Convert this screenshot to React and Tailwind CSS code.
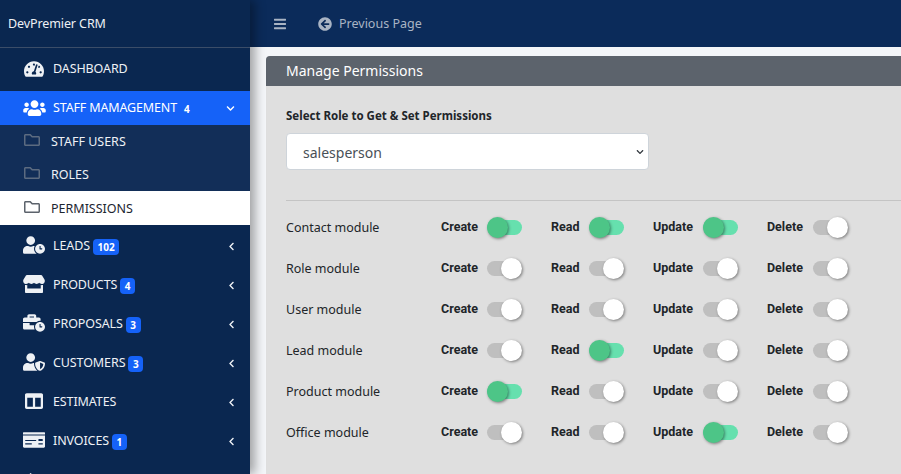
import React from "react";
import {
  FaTachometerAlt,
  FaUsers,
  FaChevronDown,
  FaChevronLeft,
  FaRegFolder,
  FaUserClock,
  FaStore,
  FaBusinessTime,
  FaUserShield,
  FaColumns,
  FaMoneyCheck,
  FaTasks,
  FaBars,
  FaArrowCircleLeft,
} from "react-icons/fa";

const menu = [
  { label: "LEADS", badge: "102", icon: FaUserClock },
  { label: "PRODUCTS", badge: "4", icon: FaStore },
  { label: "PROPOSALS", badge: "3", icon: FaBusinessTime },
  { label: "CUSTOMERS", badge: "3", icon: FaUserShield },
  { label: "ESTIMATES", icon: FaColumns },
  { label: "INVOICES", badge: "1", icon: FaMoneyCheck },
];

const subMenu = [
  { label: "STAFF USERS" },
  { label: "ROLES" },
  { label: "PERMISSIONS", active: true },
];

const modules = [
  { name: "Contact module", on: [true, true, true, false] },
  { name: "Role module", on: [false, false, false, false] },
  { name: "User module", on: [false, false, false, false] },
  { name: "Lead module", on: [false, true, false, false] },
  { name: "Product module", on: [true, false, false, false] },
  { name: "Office module", on: [false, false, true, false] },
];

const actions = ["Create", "Read", "Update", "Delete"];

const Toggle = ({ on }) => (
  <div
    className={`flex h-[15px] w-[35px] items-center rounded-full ${
      on ? "justify-start bg-[#66e0ae]" : "justify-end bg-[#bfbfbf]"
    }`}
  >
    <div
      className={`h-[21px] w-[21px] shrink-0 rounded-full shadow-[1px_1px_3px_rgba(0,0,0,0.45)] ${
        on ? "bg-[#4dc587]" : "bg-white"
      }`}
    />
  </div>
);

const Sidebar = () => (
  <aside className="z-10 flex w-[250px] shrink-0 flex-col bg-[#0a2750] text-[#eef1f5] shadow-[5px_0_10px_rgba(0,0,0,0.35)]">
    <div className="flex h-[48px] shrink-0 items-center border-b border-[#3b4d68] pl-2 pt-[1px] text-[12.5px] tracking-[-0.1px]">
      DevPremier CRM
    </div>
    <div className="flex h-[43px] shrink-0 items-center pb-[1px] pl-[24px] text-[12.5px] tracking-[-0.1px]">
      <span className="flex w-[29px] shrink-0">
        <FaTachometerAlt className="mt-[-1px] h-[18px] w-[20px]" />
      </span>
      DASHBOARD
    </div>
    <div className="flex h-[34px] shrink-0 items-center bg-[#1562f8] pl-[23px] pr-[15px] text-[12.5px] tracking-[-0.15px] text-white">
      <span className="flex w-[30px] shrink-0">
        <FaUsers className="h-[18px] w-[23px]" />
      </span>
      STAFF MAMAGEMENT
      <span className="ml-[7px] mt-[2px] text-[10px] font-bold">4</span>
      <FaChevronDown className="ml-auto h-[9px] w-[9px]" />
    </div>
    <div className="flex shrink-0 flex-col bg-[#122e58]">
      {subMenu.map((item) => (
        <div
          key={item.label}
          className={`flex items-center pl-[23px] text-[12.5px] ${
            item.active ? "h-[34px] bg-white text-[#1c2530]" : "h-[33px]"
          }`}
        >
          <span className={`flex w-[28px] shrink-0 ${item.active ? "text-[#5c636c]" : "text-[#5c6b80]"}`}>
            <FaRegFolder className="mt-[-3px] h-[16px] w-[18px]" />
          </span>
          <span className="mt-[2px]">{item.label}</span>
        </div>
      ))}
    </div>
    <div className="flex flex-col pt-[2px]">
      {menu.map((item) => {
        const Icon = item.icon;
        return (
          <div
            key={item.label}
            className="flex h-[39px] shrink-0 items-center pl-[23px] pr-[14px] text-[12.5px] tracking-[-0.1px]"
          >
            <span className="flex w-[30px] shrink-0">
              <Icon className="mt-[-3px] h-[18px] w-[22px]" />
            </span>
            <span>{item.label}</span>
            {item.badge && (
              <span className="ml-[3px] mt-[1px] rounded-[4px] bg-[#1562f8] px-[4.5px] py-[2px] text-[10px] font-bold leading-[12px] tracking-normal text-white">
                {item.badge}
              </span>
            )}
            <FaChevronLeft className="ml-auto h-[9px] w-[9px]" />
          </div>
        );
      })}
      <div className="flex h-[39px] shrink-0 items-center pl-[25px]">
        <FaTasks className="h-[18px] w-[20px]" />
      </div>
    </div>
  </aside>
);

export default function App() {
  return (
    <div
      className="flex h-screen w-full overflow-hidden bg-[#f4f6f9] text-[#212529]"
      style={{ fontFamily: '"Noto Sans", "Open Sans", sans-serif' }}
    >
      <Sidebar />
      <main className="flex min-w-0 flex-1 flex-col">
        <header className="flex h-[47px] shrink-0 items-center bg-[#0b2b5a] pl-[24px] text-[12.5px] text-[#a9b4c4]">
          <FaBars className="h-[14px] w-[12px]" />
          <FaArrowCircleLeft className="ml-[32px] h-[14px] w-[14px]" />
          <span className="ml-[7px] mt-[1px]">Previous Page</span>
        </header>
        <div className="flex-1 pl-[16px] pt-[9px]">
          <section className="h-full rounded-tl-[4px] bg-[#dfdfdf]">
            <h1 className="flex h-[30px] items-center rounded-tl-[4px] bg-[#5c636c] pb-[2px] pl-[20px] text-[14px] font-normal text-white">
              Manage Permissions
            </h1>
            <div className="pl-[20px]">
              <label className="block pt-[21px] text-[11.5px] font-bold leading-[18px] text-[#212529]">
                Select Role to Get &amp; Set Permissions
              </label>
              <div className="mt-[8px] flex h-[37px] w-[363px] items-center justify-between rounded-[4px] border border-[#ced4da] bg-white pl-[16px] pr-[3px] text-[14px] text-[#495057]">
                <span className="mt-[1px]">salesperson</span>
                <FaChevronDown className="h-[8px] w-[10px] text-[#343a40]" />
              </div>
              <hr className="mt-[30px] border-[#c4c4c4]" />
              <div className="mt-[6px] grid grid-cols-[155px_46px_64px_38px_64px_50px_64px_46px_35px]">
                {modules.map((row) => (
                  <React.Fragment key={row.name}>
                    <div className="flex h-[41px] items-center pt-[1px] text-[12.5px] text-[#212529]">{row.name}</div>
                    {actions.map((action, i) => (
                      <React.Fragment key={action}>
                        <div
                          className="flex h-[41px] items-center text-[12.5px] font-bold text-[#212529]"
                          style={{ fontFamily: "Roboto, sans-serif" }}
                        >
                          {action}
                        </div>
                        <div className="flex h-[41px] items-center">
                          <Toggle on={row.on[i]} />
                        </div>
                      </React.Fragment>
                    ))}
                  </React.Fragment>
                ))}
              </div>
            </div>
          </section>
        </div>
      </main>
    </div>
  );
}
